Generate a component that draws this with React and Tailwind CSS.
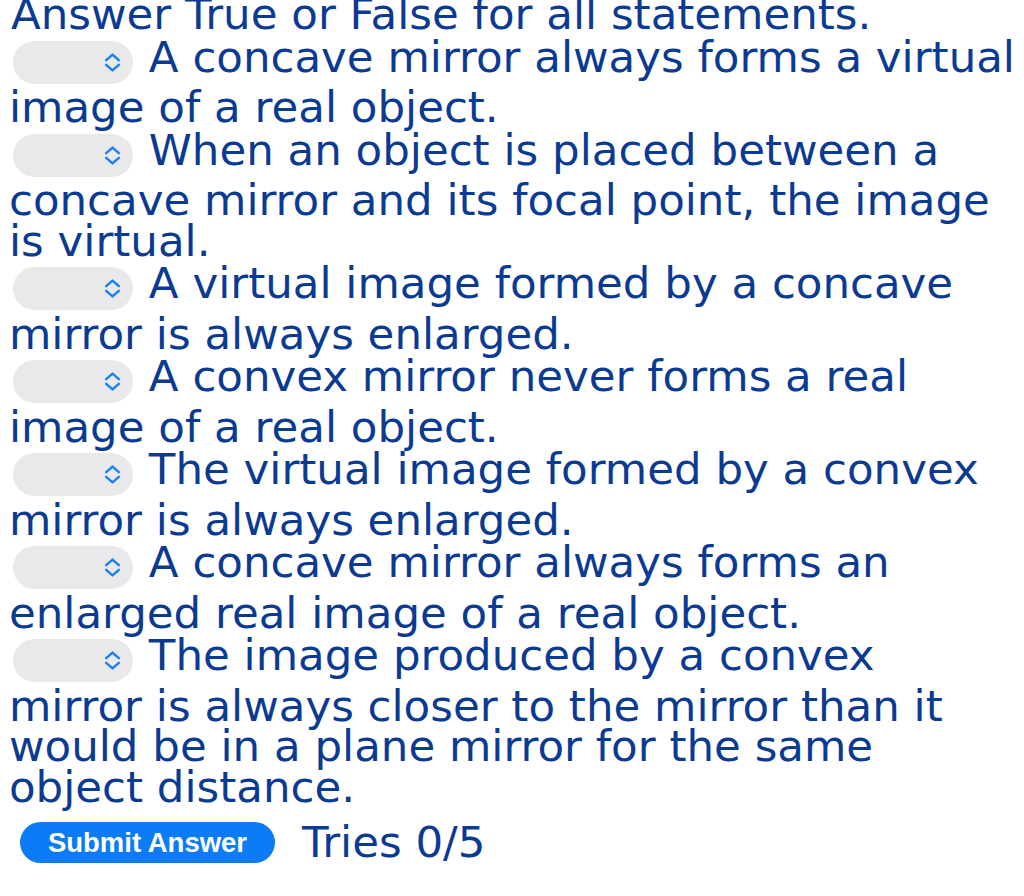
import React from "react";

const statements = [
  ["A concave mirror always forms a virtual", "image of a real object."],
  [
    "When an object is placed between a",
    "concave mirror and its focal point, the image",
    "is virtual.",
  ],
  ["A virtual image formed by a concave", "mirror is always enlarged."],
  ["A convex mirror never forms a real", "image of a real object."],
  ["The virtual image formed by a convex", "mirror is always enlarged."],
  ["A concave mirror always forms an", "enlarged real image of a real object."],
  [
    "The image produced by a convex",
    "mirror is always closer to the mirror than it",
    "would be in a plane mirror for the same",
    "object distance.",
  ],
];

function SelectBox() {
  return (
    <span className="inline-block overflow-hidden align-[-16px] mt-[6px] mb-[3.5px] ml-[4px] mr-[2px] h-[43px] w-[120px] rounded-full bg-[#e9e9eb]">
      <span className="flex h-full items-center justify-end pr-[12px]">
        <svg width="17" height="19" viewBox="0 0 17 19" fill="none">
          <path
            d="M2.2 7.2 L8.5 1.6 L14.8 7.2"
            stroke="#1a7ef5"
            strokeWidth="2.4"
            strokeLinecap="round"
            strokeLinejoin="round"
          />
          <path
            d="M2.2 11.8 L8.5 17.4 L14.8 11.8"
            stroke="#1a7ef5"
            strokeWidth="2.4"
            strokeLinecap="round"
            strokeLinejoin="round"
          />
        </svg>
      </span>
    </span>
  );
}

export default function App() {
  return (
    <div className="-mt-[6px] pl-[9px] pr-0 text-[#0b3a92] text-[43.5px] leading-[40.5px] font-['DejaVu_Sans',sans-serif]">
      <div className="pl-[2px]">Answer True or False for all statements.</div>
      {statements.map((lines, i) => (
        <div key={i}>
          <SelectBox />
          {" " + lines[0]}
          {lines.slice(1).map((l, j) => (
            <React.Fragment key={j}>
              <br />
              {l}
            </React.Fragment>
          ))}
        </div>
      ))}
      <div className="mt-[15px] ml-[11px] flex items-center gap-[27px]">
        <button className="h-[41px] w-[255px] rounded-full bg-[#0b7cf6] text-white font-bold text-[27.5px] leading-none font-['Liberation_Sans',Arial,sans-serif]">
          Submit Answer
        </button>
        <span>Tries 0/5</span>
      </div>
    </div>
  );
}
